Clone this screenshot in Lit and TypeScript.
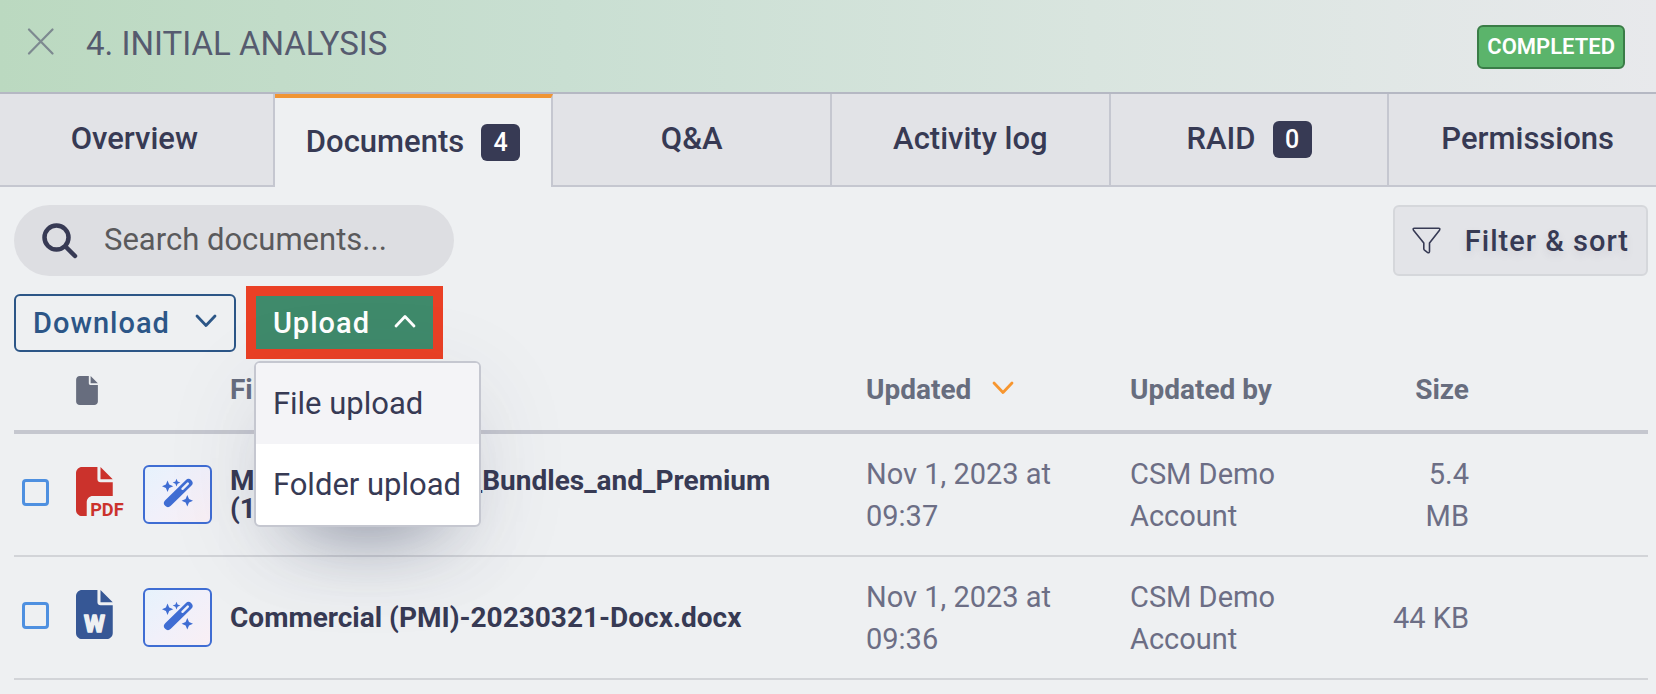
import { LitElement, html, css, svg, nothing } from "lit";
import { customElement, property, state } from "lit/decorators.js";

type FileKind = "pdf" | "word";

interface Doc {
  kind: FileKind;
  name: string;
  updated: string;
  by: string;
  size: string;
}

const TABS: { label: string; count?: number }[] = [
  { label: "Overview" },
  { label: "Documents", count: 4 },
  { label: "Q&A" },
  { label: "Activity log" },
  { label: "RAID", count: 0 },
  { label: "Permissions" },
];

const DOCS: Doc[] = [
  {
    kind: "pdf",
    name: "Marketing_Product_Bundles_and_Premium (1).pdf",
    updated: "Nov 1, 2023 at 09:37",
    by: "CSM Demo Account",
    size: "5.4 MB",
  },
  {
    kind: "word",
    name: "Commercial (PMI)-20230321-Docx.docx",
    updated: "Nov 1, 2023 at 09:36",
    by: "CSM Demo Account",
    size: "44 KB",
  },
];

const chevron = (up: boolean) => html`
  <svg class="chevron" width="22" height="14" viewBox="0 0 22 14" aria-hidden="true">
    <path
      d=${up ? "M2 12 L11 2.5 L20 12" : "M2 2 L11 11.5 L20 2"}
      fill="none"
      stroke="currentColor"
      stroke-width="2.8"
      stroke-linecap="round"
      stroke-linejoin="round"
    />
  </svg>
`;

@customElement("file-icon")
export class FileIcon extends LitElement {
  @property() kind: FileKind = "pdf";

  static styles = css`
    :host {
      display: block;
    }
    svg {
      display: block;
      overflow: visible;
    }
    .mark {
      font-family: Roboto, sans-serif;
      font-weight: 700;
    }
    .pdf-mark {
      font-size: 190px;
    }
    .word-mark {
      font-size: 250px;
      stroke-width: 16px;
      stroke-linejoin: round;
    }
  `;

  render() {
    const pdf = this.kind === "pdf";
    return html`
      <svg width="49" height="49" viewBox="0 0 512 512" role="img" aria-label=${pdf ? "PDF file" : "Word file"}>
        ${pdf
          ? svg`
              <path fill="#cb322c" d="M0 64C0 28.7 28.7 0 64 0h160v128c0 17.7 14.3 32 32 32h128v144H176c-35.3 0-64 28.7-64 64v144H64c-35.3 0-64-28.7-64-64V64zM384 128H256V0l128 128z" />
              <text class="mark pdf-mark" x="148" y="508" fill="#cb322c">PDF</text>`
          : svg`
              <path fill="#365795" d="M0 64C0 28.7 28.7 0 64 0h160v128c0 17.7 14.3 32 32 32h128v288c0 35.3-28.7 64-64 64H64c-35.3 0-64-28.7-64-64V64zM384 128H256V0l128 128z" />
              <text class="mark word-mark" x="192" y="434" text-anchor="middle" fill="#eef0f2" stroke="#eef0f2">W</text>`}
      </svg>
    `;
  }
}

@customElement("app-root")
export class AppRoot extends LitElement {
  @state() private activeTab = "Documents";
  @state() private menuOpen = true;

  static styles = css`
    :host {
      display: block;
      min-height: 100vh;
      overflow: hidden;
      background: #eef0f2;
      color: #373a54;
      font-family: Roboto, sans-serif;
      font-size: 29px;
      line-height: 42px;
    }
    * {
      box-sizing: border-box;
    }
    button,
    input {
      font: inherit;
      color: inherit;
      margin: 0;
    }
    button {
      cursor: pointer;
    }
    svg {
      display: block;
      flex: none;
    }

    .header {
      display: flex;
      align-items: center;
      gap: 31px;
      height: 94px;
      padding: 0 31px 0 27px;
      border-bottom: 2px solid #b5b8c3;
      background: linear-gradient(90deg, #bbd9c0, #c9dfd2 34%, #d9e5df 66%, #e8e9ec);
    }
    .close {
      padding: 0 0 10px;
      border: 0;
      background: none;
      color: #7d8990;
    }
    .title {
      flex: 1;
      margin: 0;
      padding-bottom: 4px;
      font-size: 33px;
      font-weight: 400;
      color: #565b6f;
    }
    .status {
      margin-top: 2px;
      padding: 0 8px;
      border: 2px solid #3a7d47;
      border-radius: 6px;
      background: #5bb46b;
      color: #fff;
      font-size: 22px;
      font-weight: 600;
      line-height: 40px;
    }

    .tabs {
      display: flex;
      height: 93px;
      margin: 0 -12px 0 -4px;
    }
    .tab {
      display: flex;
      flex: 1 1 0;
      align-items: center;
      justify-content: center;
      gap: 17px;
      padding: 0;
      border: 0;
      border-right: 2px solid #c5c7d0;
      border-bottom: 2px solid #c5c7d0;
      background: #e2e3e7;
      font-size: 31px;
      font-weight: 500;
      white-space: nowrap;
    }
    .tab.active {
      border-top: 4px solid #f09534;
      border-bottom: 0;
      background: #eef0f2;
    }
    .label {
      padding-bottom: 2px;
    }
    .count {
      min-width: 39px;
      border-radius: 6px;
      background: #373a54;
      color: #fff;
      font-size: 25px;
      line-height: 37px;
      text-align: center;
    }

    .content {
      padding: 18px 8px 0 14px;
    }
    .row {
      display: flex;
      align-items: center;
      gap: 10px;
    }
    .spread {
      justify-content: space-between;
      margin-bottom: 10px;
    }
    .search {
      display: flex;
      align-items: center;
      gap: 26px;
      width: 440px;
      height: 71px;
      padding: 0 28px;
      border-radius: 36px;
      background: #dddee2;
    }
    .search input {
      flex: 1;
      min-width: 0;
      padding: 0 0 2px;
      border: 0;
      outline: 0;
      background: none;
      font-size: 31px;
    }
    .search input::placeholder {
      color: #5a5a5c;
      opacity: 1;
    }
    .btn {
      display: flex;
      align-items: center;
      gap: 24px;
      padding: 0 17px;
      border: 2px solid;
      border-radius: 6px;
      background: none;
      font-weight: 500;
      letter-spacing: 1px;
      white-space: nowrap;
    }
    .btn .chevron {
      margin-bottom: 4px;
    }
    .filter {
      height: 71px;
      border-color: #d5d7db;
      background: #e3e4e8;
      text-shadow: 0 4px 8px rgba(55, 58, 84, 0.1);
    }
    .download {
      gap: 25px;
      height: 58px;
      color: #2c5687;
    }
    .menu-anchor {
      position: relative;
    }
    .upload {
      height: 73px;
      border: 10px solid #ea4025;
      border-radius: 0;
      background: #3f8a6b;
      color: #fff;
    }
    .menu {
      position: absolute;
      z-index: 1;
      top: 75px;
      left: 8px;
      border: 2px solid #c5c7d0;
      border-radius: 6px;
      background: #fff;
      box-shadow:
        0 46px 76px -48px rgba(50, 60, 90, 0.6),
        0 24px 100px 0 rgba(50, 60, 90, 0.09);
    }
    .menu-item {
      display: block;
      width: 100%;
      padding: 20px 18px 20px 17px;
      border: 0;
      background: none;
      font-size: 31px;
      line-height: 41px;
      text-align: left;
      white-space: nowrap;
    }
    .menu-item:first-child {
      border-radius: 4px 4px 0 0;
      background: #f4f4f7;
    }

    table {
      width: 100%;
      border-collapse: separate;
      border-spacing: 0;
      table-layout: fixed;
    }
    .c-check {
      width: 62px;
    }
    .c-type {
      width: 67px;
    }
    .c-magic {
      width: 87px;
    }
    .c-updated {
      width: 264px;
    }
    .c-by {
      width: 259px;
    }
    .c-size {
      width: 80px;
    }
    .c-rest {
      width: 179px;
    }
    th {
      padding: 10px 0 19px;
      border-bottom: 4px solid #c5c7cf;
      color: #676d7e;
      font-size: 28px;
      font-weight: 700;
      text-align: left;
    }
    td {
      height: 123px;
      padding: 0;
      border-bottom: 2px solid #d2d4d8;
      color: #6c6e85;
      vertical-align: middle;
    }
    .sort {
      display: flex;
      align-items: center;
      gap: 21px;
      padding: 0;
      border: 0;
      background: none;
      font-weight: 700;
    }
    .sort .chevron {
      margin-bottom: 4px;
      color: #f7962f;
    }
    .size {
      text-align: right;
    }
    .updated,
    .by {
      padding-right: 40px;
    }
    td.name {
      padding-right: 60px;
      color: #373a54;
      font-size: 28px;
      font-weight: 700;
      line-height: 28px;
    }
    .check {
      display: block;
      width: 27px;
      height: 27px;
      margin: 0 0 4px 8px;
      border: 3px solid #4e90e0;
      border-radius: 4px;
      appearance: none;
    }
    .check:checked {
      background: #4e90e0;
    }
    .type {
      padding-bottom: 6px;
    }
    .magic {
      display: grid;
      place-items: center;
      width: 69px;
      height: 59px;
      padding: 0;
      border: 2px solid #3f6dd3;
      border-radius: 6px;
      background: linear-gradient(135deg, #e6f2fc, #f1f0fa 50%, #f9eff4);
      color: #3f6dd3;
    }
    .magic svg {
      margin-bottom: 4px;
    }
  `;

  private renderTab(tab: { label: string; count?: number }) {
    const active = tab.label === this.activeTab;
    return html`
      <button
        class="tab ${active ? "active" : ""}"
        role="tab"
        aria-selected=${active ? "true" : "false"}
        @click=${() => (this.activeTab = tab.label)}
      >
        <span class="label">${tab.label}</span>
        ${tab.count === undefined ? nothing : html`<span class="count">${tab.count}</span>`}
      </button>
    `;
  }

  private renderDoc(doc: Doc) {
    return html`
      <tr>
        <td><input class="check" type="checkbox" aria-label="Select ${doc.name}" /></td>
        <td class="type"><file-icon .kind=${doc.kind}></file-icon></td>
        <td>
          <button class="magic" aria-label="Summarise ${doc.name}">
            <svg width="32" height="30" viewBox="0 0 32 30" aria-hidden="true">
              <path d="M6 25 L26.5 5" stroke="currentColor" stroke-width="8" stroke-linecap="round" />
              <path d="M20.5 10.8 L25.8 5.6" stroke="#eef1fb" stroke-width="2.4" stroke-linecap="round" />
              <g fill="currentColor">
                <path d="M5.5 2.5 L7.2 6.6 L11.3 8.2 L7.2 9.9 L5.5 14 L3.9 9.9 L0 8.2 L3.9 6.6 Z" />
                <path d="M14.5 0.8 L15.6 3.5 L18.3 4.6 L15.6 5.7 L14.5 8.4 L13.4 5.7 L10.7 4.6 L13.4 3.5 Z" />
                <path d="M25.3 17 L27 21 L31 22.7 L27 24.4 L25.3 28.5 L23.6 24.4 L19.6 22.7 L23.6 21 Z" />
              </g>
            </svg>
          </button>
        </td>
        <td class="name">${doc.name}</td>
        <td class="updated">${doc.updated}</td>
        <td class="by">${doc.by}</td>
        <td class="size">${doc.size}</td>
        <td></td>
      </tr>
    `;
  }

  render() {
    return html`
      <header class="header">
        <button class="close" aria-label="Close">
          <svg width="28" height="27" viewBox="0 0 28 27" aria-hidden="true">
            <path d="M2 1.5 L25.5 25.5 M25.5 1.5 L2 25.5" stroke="currentColor" stroke-width="2.2" stroke-linecap="round" />
          </svg>
        </button>
        <h1 class="title">4. INITIAL ANALYSIS</h1>
        <span class="status">COMPLETED</span>
      </header>

      <nav class="tabs" role="tablist">${TABS.map((t) => this.renderTab(t))}</nav>

      <main class="content">
        <div class="row spread">
          <label class="search">
            <svg width="36" height="36" viewBox="0 0 36 36" aria-hidden="true">
              <circle cx="14.5" cy="14.5" r="12" fill="none" stroke="currentColor" stroke-width="4.5" />
              <path d="M23.5 23.5 L33 33" stroke="currentColor" stroke-width="4.5" stroke-linecap="round" />
            </svg>
            <input type="text" placeholder="Search documents..." aria-label="Search documents" />
          </label>
          <button class="btn filter">
            <svg width="29" height="27" viewBox="0 0 29 27" aria-hidden="true">
              <path
                d="M2.5 1.2 H26.5 Q28.5 1.2 27.5 3.2 L17.5 16 V24.5 Q17.2 26.5 15.4 25.4 L12.5 23.2 Q11.8 22.6 11.8 21.8 V16 L1.5 3.2 Q0.5 1.2 2.5 1.2 Z"
                fill="none"
                stroke="currentColor"
                stroke-width="1.6"
                stroke-linejoin="round"
              />
            </svg>
            Filter &amp; sort
          </button>
        </div>

        <div class="row">
          <button class="btn download">Download ${chevron(false)}</button>
          <div class="menu-anchor">
            <button
              class="btn upload"
              aria-haspopup="menu"
              aria-expanded=${this.menuOpen ? "true" : "false"}
              @click=${() => (this.menuOpen = !this.menuOpen)}
            >
              Upload ${chevron(this.menuOpen)}
            </button>
            ${this.menuOpen
              ? html`<div class="menu" role="menu">
                  <button class="menu-item" role="menuitem">File upload</button>
                  <button class="menu-item" role="menuitem">Folder upload</button>
                </div>`
              : nothing}
          </div>
        </div>

        <table>
          <colgroup>
            <col class="c-check" />
            <col class="c-type" />
            <col class="c-magic" />
            <col />
            <col class="c-updated" />
            <col class="c-by" />
            <col class="c-size" />
            <col class="c-rest" />
          </colgroup>
          <thead>
            <tr>
              <th></th>
              <th>
                <svg width="22" height="29" viewBox="0 0 384 512" role="img" aria-label="File type">
                  <path fill="currentColor" d="M0 64C0 28.7 28.7 0 64 0h160v128c0 17.7 14.3 32 32 32h128v288c0 35.3-28.7 64-64 64H64c-35.3 0-64-28.7-64-64V64zM384 128H256V0l128 128z" />
                </svg>
              </th>
              <th></th>
              <th>File</th>
              <th><button class="sort">Updated ${chevron(false)}</button></th>
              <th>Updated by</th>
              <th class="size">Size</th>
              <th></th>
            </tr>
          </thead>
          <tbody>
            ${DOCS.map((d) => this.renderDoc(d))}
          </tbody>
        </table>
      </main>
    `;
  }
}
